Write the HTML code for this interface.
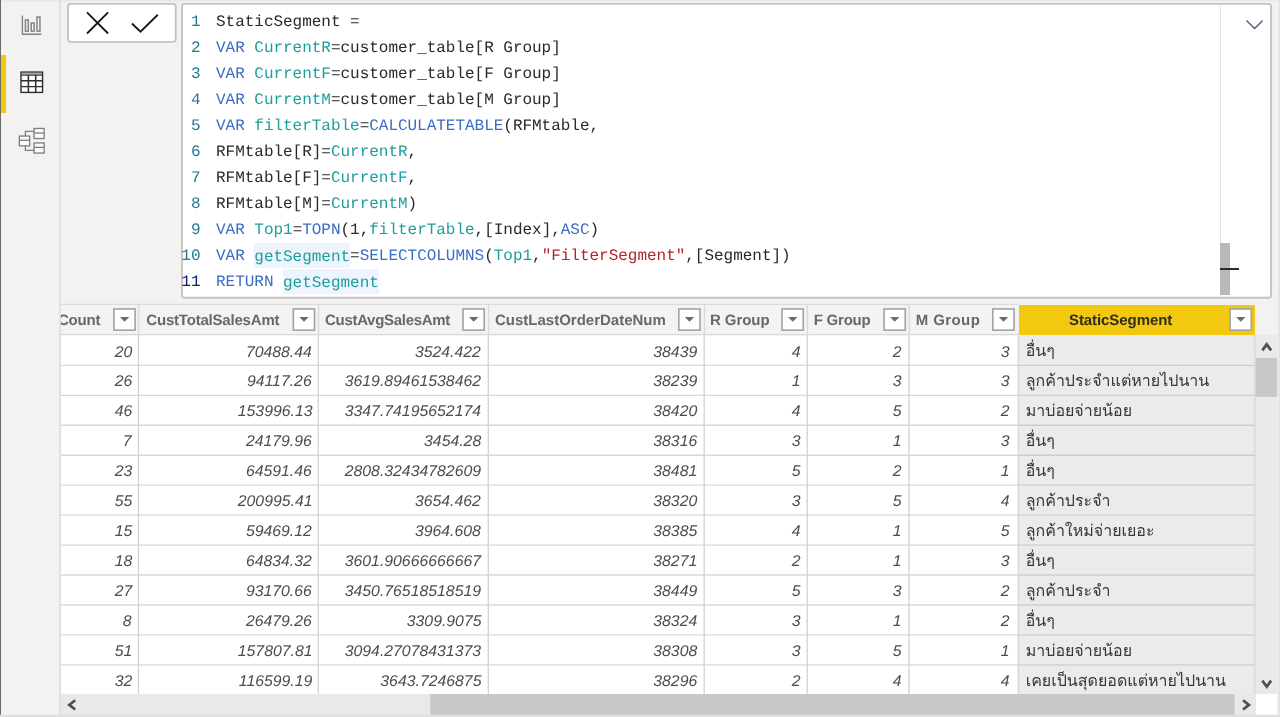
<!DOCTYPE html><html><head><meta charset="utf-8"><title>Power BI</title><style>

html,body{margin:0;padding:0}
body{text-rendering:geometricPrecision;width:1280px;height:717px;overflow:hidden;background:#f3f2f1;position:relative;font-family:"Liberation Sans",sans-serif}
.abs{position:absolute}
.code{position:absolute;left:0;white-space:pre;font-family:"Liberation Mono",monospace;font-size:16.0px;letter-spacing:-0.025px;line-height:26.0px;height:26.0px;color:#2a2a2a}
.ln{position:absolute;text-align:right;width:40px;color:#237893}
.k{color:#3c6cc4}.v,.h{color:#1f9e9e}.s{color:#b5262a}
.h{background:#eef4fd;padding:4.7px 0 3px}
.hd{position:absolute;top:306.4px;height:30px;line-height:30px;font-weight:bold;font-size:15.0px;color:#6a6866;white-space:nowrap}
.dd{position:absolute;top:308.2px;width:19.4px;height:19.2px;border:1.7px solid #a3a3a3;background:#fff;box-sizing:content-box}
.dd:after{content:"";position:absolute;left:5.1px;top:7.1px;border-left:4.6px solid transparent;border-right:4.6px solid transparent;border-top:4.6px solid #6e6e6e}
.c{position:absolute;height:30px;line-height:30px;font-style:italic;font-size:15.55px;color:#4f4d4b;text-align:right;white-space:nowrap;transform:scaleX(1.017);transform-origin:100% 50%}
.vl{position:absolute;width:1.2px;background:#dedcda}
.hl{position:absolute;height:1.2px;background:#dedcda}
.th{position:absolute;left:1018px;overflow:hidden}
.th text{font-family:"Liberation Sans",sans-serif;font-size:16px;fill:#383736;stroke:none}

</style></head><body><div id="root" style="position:absolute;left:0;top:0;width:1280px;height:717px;will-change:transform">
<div class="abs" style="left:0;top:0;width:1280px;height:3px;background:linear-gradient(#e5e4e3,#edeceb 40%,#f3f2f1)"></div>
<div class="abs" style="left:0;top:0;width:1.2px;height:717px;background:#6b6b6b"></div>
<svg class="abs" style="left:0;top:0" width="1280" height="717" viewBox="0 0 1280 717"><rect x="59.3" y="0" width="1.6" height="717" fill="#dfdddb"/><rect x="1278.4" y="0" width="1.6" height="717" fill="#e4e2e0"/></svg>
<div class="abs" style="left:1px;top:55px;width:5px;height:58px;background:#f2c811"></div>
<svg class="abs" style="left:0;top:0" width="60" height="170" viewBox="0 0 60 170" fill="none">
<g stroke="#828180" stroke-width="1.45">
<path d="M22.4 15.6V34.2H41.3" stroke-width="1.35"/>
<rect x="25.45" y="19.95" width="2.85" height="11.2"/>
<rect x="31.25" y="22.95" width="2.85" height="8.2"/>
<rect x="36.95" y="17.05" width="3" height="14.1"/>
</g>
<g stroke="#2f2e2d" stroke-width="1.4">
<rect x="21" y="72.1" width="21.55" height="20.3" fill="#fff"/>
<rect x="21.7" y="72.8" width="20.15" height="1.8" fill="#a8a8a8" stroke="none"/>
<path d="M21 75.1H42.55" stroke-width="1.2"/>
<path d="M21 80.75H42.55M21 86.7H42.55" stroke-width="1.3"/>
<path d="M28.4 75.1V92.4M35.7 75.1V92.4" stroke-width="1.5"/>
</g>
<g stroke="#7e7d7c" stroke-width="1.3" fill="#fafafa">
<path d="M25.4 136V131.4H34M25.4 146V150.3H34" fill="none"/>
<rect x="19.35" y="136.05" width="10.3" height="9.8"/>
<path d="M19.35 140.3H29.65"/>
<rect x="34.05" y="128.45" width="10.1" height="10.1"/>
<path d="M34.05 133H44.15"/>
<rect x="34.05" y="142.95" width="10.1" height="10.1"/>
<path d="M34.05 147.4H44.15"/>
</g>
</svg>
<svg class="abs" style="left:0;top:0" width="1280" height="304" viewBox="0 0 1280 304" fill="#fff" stroke="#c6c4c2" stroke-width="1.9"><rect x="68" y="3.85" width="107.7" height="38.05" rx="2.6"/><rect x="182" y="3.85" width="1089.1" height="293.95" rx="2.6"/></svg>
<svg class="abs" style="left:60px;top:0" width="120" height="46" viewBox="60 0 120 46" fill="none" stroke="#1c1718" stroke-width="1.9">
<path d="M87 12.4L108.1 33.5M108.1 12.4L87 33.5"/>
<path d="M131.9 23.5L140.5 31.6L157.8 14.8"/>
</svg>
<div class="abs" style="left:1219.5px;top:5px;width:1px;height:291px;background:#e4e4e4"></div>
<div class="abs" style="left:1220.3px;top:242.6px;width:9.5px;height:52px;background:#b8b8b8"></div>
<div class="abs" style="left:1220.3px;top:267.8px;width:18.7px;height:2.2px;background:#2b2b2b"></div>
<svg class="abs" style="left:1240px;top:10px" width="30" height="24" viewBox="1240 10 30 24" fill="none" stroke="#51606f" stroke-width="1.4"><path d="M1246.5 20.6L1254.6 28.6L1262.7 20.6"/></svg>
<div class="code" style="top:9.20px"><span class="ln" style="left:160.5px;color:#237893">1</span><span class="abs" style="left:216.0px">StaticSegment =</span></div>
<div class="code" style="top:35.20px"><span class="ln" style="left:160.5px;color:#237893">2</span><span class="abs" style="left:216.0px"><span class="k">VAR </span><span class="v">CurrentR</span>=customer_table[R Group]</span></div>
<div class="code" style="top:61.20px"><span class="ln" style="left:160.5px;color:#237893">3</span><span class="abs" style="left:216.0px"><span class="k">VAR </span><span class="v">CurrentF</span>=customer_table[F Group]</span></div>
<div class="code" style="top:87.20px"><span class="ln" style="left:160.5px;color:#237893">4</span><span class="abs" style="left:216.0px"><span class="k">VAR </span><span class="v">CurrentM</span>=customer_table[M Group]</span></div>
<div class="code" style="top:113.20px"><span class="ln" style="left:160.5px;color:#237893">5</span><span class="abs" style="left:216.0px"><span class="k">VAR </span><span class="v">filterTable</span>=<span class="k">CALCULATETABLE</span>(RFMtable,</span></div>
<div class="code" style="top:139.20px"><span class="ln" style="left:160.5px;color:#237893">6</span><span class="abs" style="left:216.0px">RFMtable[R]=<span class="v">CurrentR</span>,</span></div>
<div class="code" style="top:165.20px"><span class="ln" style="left:160.5px;color:#237893">7</span><span class="abs" style="left:216.0px">RFMtable[F]=<span class="v">CurrentF</span>,</span></div>
<div class="code" style="top:191.20px"><span class="ln" style="left:160.5px;color:#237893">8</span><span class="abs" style="left:216.0px">RFMtable[M]=<span class="v">CurrentM</span>)</span></div>
<div class="code" style="top:217.20px"><span class="ln" style="left:160.5px;color:#237893">9</span><span class="abs" style="left:216.0px"><span class="k">VAR </span><span class="v">Top1</span>=<span class="k">TOPN</span>(1,<span class="v">filterTable</span>,[Index],<span class="k">ASC</span>)</span></div>
<div class="code" style="top:243.20px"><span class="ln" style="left:160.5px;color:#237893">10</span><span class="abs" style="left:216.0px"><span class="k">VAR </span><span class="h">getSegment</span>=<span class="k">SELECTCOLUMNS</span>(<span class="v">Top1</span>,<span class="s">"FilterSegment"</span>,[Segment])</span></div>
<div class="code" style="top:269.20px"><span class="ln" style="left:160.5px;color:#0b216f">11</span><span class="abs" style="left:216.0px"><span class="k">RETURN </span><span class="h">getSegment</span></span></div>
<div class="abs" style="left:60.9px;top:335.0px;width:957.6px;height:359.0px;background:#fff"></div>
<div class="abs" style="left:1018.5px;top:335.0px;width:236.9000000000001px;height:359.0px;background:#edebe9"></div>
<div class="abs" style="left:60.9px;top:304.5px;width:957.6px;height:30.5px;background:#f4f3f2"></div>
<div class="abs" style="left:1018.8px;top:305px;width:236.60000000000014px;height:29.5px;background:#f2c811"></div>
<div class="abs" style="left:60.9px;top:305px;width:60px;height:30px;overflow:hidden"><div class="hd" id="h0" style="top:1.4px;right:20.70px;letter-spacing:-0.200px">Count</div></div>
<div class="hd" id="h1" style="left:146.30px;letter-spacing:-0.200px">CustTotalSalesAmt</div>
<div class="hd" id="h2" style="left:325.00px;letter-spacing:-0.300px">CustAvgSalesAmt</div>
<div class="hd" id="h3" style="left:495.00px;letter-spacing:0.000px">CustLastOrderDateNum</div>
<div class="hd" id="h4" style="left:710.00px;letter-spacing:-0.070px">R Group</div>
<div class="hd" id="h5" style="left:813.70px;letter-spacing:-0.220px">F Group</div>
<div class="hd" id="h6" style="left:915.70px;letter-spacing:0.420px">M Group</div>
<div class="hd" id="h7" style="left:1069.00px;color:#302d1d;letter-spacing:-0.080px">StaticSegment</div>
<svg class="abs" style="left:0;top:300px" width="1280" height="40" viewBox="0 300 1280 40"><g transform="translate(113.10 308.15)"><rect x="0.8" y="0.8" width="21.2" height="21.2" fill="#fff" stroke="#a2a2a2" stroke-width="1.6"/><path d="M6.8 8.9H16.2L11.5 13.5Z" fill="#6c6c6c"/></g><g transform="translate(292.50 308.15)"><rect x="0.8" y="0.8" width="21.2" height="21.2" fill="#fff" stroke="#a2a2a2" stroke-width="1.6"/><path d="M6.8 8.9H16.2L11.5 13.5Z" fill="#6c6c6c"/></g><g transform="translate(462.20 308.15)"><rect x="0.8" y="0.8" width="21.2" height="21.2" fill="#fff" stroke="#a2a2a2" stroke-width="1.6"/><path d="M6.8 8.9H16.2L11.5 13.5Z" fill="#6c6c6c"/></g><g transform="translate(678.00 308.15)"><rect x="0.8" y="0.8" width="21.2" height="21.2" fill="#fff" stroke="#a2a2a2" stroke-width="1.6"/><path d="M6.8 8.9H16.2L11.5 13.5Z" fill="#6c6c6c"/></g><g transform="translate(781.25 308.15)"><rect x="0.8" y="0.8" width="21.2" height="21.2" fill="#fff" stroke="#a2a2a2" stroke-width="1.6"/><path d="M6.8 8.9H16.2L11.5 13.5Z" fill="#6c6c6c"/></g><g transform="translate(883.25 308.15)"><rect x="0.8" y="0.8" width="21.2" height="21.2" fill="#fff" stroke="#a2a2a2" stroke-width="1.6"/><path d="M6.8 8.9H16.2L11.5 13.5Z" fill="#6c6c6c"/></g><g transform="translate(992.00 308.15)"><rect x="0.8" y="0.8" width="21.2" height="21.2" fill="#fff" stroke="#a2a2a2" stroke-width="1.6"/><path d="M6.8 8.9H16.2L11.5 13.5Z" fill="#6c6c6c"/></g><g transform="translate(1229.30 308.15)"><rect x="0.8" y="0.8" width="21.2" height="21.2" fill="#fff" stroke="#a2a2a2" stroke-width="1.6"/><path d="M6.8 8.9H16.2L11.5 13.5Z" fill="#6c6c6c"/></g></svg>
<div class="c" style="top:337.51px;right:1147.9px">20</div>
<div class="c" style="top:337.51px;right:968.0px">70488.44</div>
<div class="c" style="top:337.51px;right:799.0px">3524.422</div>
<div class="c" style="top:337.51px;right:583.1px">38439</div>
<div class="c" style="top:337.51px;right:479.6px">4</div>
<div class="c" style="top:337.51px;right:378.5px">2</div>
<div class="c" style="top:337.51px;right:270.0px">3</div>
<svg class="th" style="top:335.36px" width="236" height="30" viewBox="0 0 236 30"><text x="7.7" y="21.2">อื่นๆ</text></svg>
<div class="c" style="top:367.46px;right:1147.9px">26</div>
<div class="c" style="top:367.46px;right:968.0px">94117.26</div>
<div class="c" style="top:367.46px;right:799.0px">3619.89461538462</div>
<div class="c" style="top:367.46px;right:583.1px">38239</div>
<div class="c" style="top:367.46px;right:479.6px">1</div>
<div class="c" style="top:367.46px;right:378.5px">3</div>
<div class="c" style="top:367.46px;right:270.0px">3</div>
<svg class="th" style="top:365.31px" width="236" height="30" viewBox="0 0 236 30"><text x="7.7" y="21.2">ลูกค้าประจำแต่หายไปนาน</text></svg>
<div class="c" style="top:397.40px;right:1147.9px">46</div>
<div class="c" style="top:397.40px;right:968.0px">153996.13</div>
<div class="c" style="top:397.40px;right:799.0px">3347.74195652174</div>
<div class="c" style="top:397.40px;right:583.1px">38420</div>
<div class="c" style="top:397.40px;right:479.6px">4</div>
<div class="c" style="top:397.40px;right:378.5px">5</div>
<div class="c" style="top:397.40px;right:270.0px">2</div>
<svg class="th" style="top:395.25px" width="236" height="30" viewBox="0 0 236 30"><text x="7.7" y="21.2">มาบ่อยจ่ายน้อย</text></svg>
<div class="c" style="top:427.35px;right:1147.9px">7</div>
<div class="c" style="top:427.35px;right:968.0px">24179.96</div>
<div class="c" style="top:427.35px;right:799.0px">3454.28</div>
<div class="c" style="top:427.35px;right:583.1px">38316</div>
<div class="c" style="top:427.35px;right:479.6px">3</div>
<div class="c" style="top:427.35px;right:378.5px">1</div>
<div class="c" style="top:427.35px;right:270.0px">3</div>
<svg class="th" style="top:425.20px" width="236" height="30" viewBox="0 0 236 30"><text x="7.7" y="21.2">อื่นๆ</text></svg>
<div class="c" style="top:457.29px;right:1147.9px">23</div>
<div class="c" style="top:457.29px;right:968.0px">64591.46</div>
<div class="c" style="top:457.29px;right:799.0px">2808.32434782609</div>
<div class="c" style="top:457.29px;right:583.1px">38481</div>
<div class="c" style="top:457.29px;right:479.6px">5</div>
<div class="c" style="top:457.29px;right:378.5px">2</div>
<div class="c" style="top:457.29px;right:270.0px">1</div>
<svg class="th" style="top:455.14px" width="236" height="30" viewBox="0 0 236 30"><text x="7.7" y="21.2">อื่นๆ</text></svg>
<div class="c" style="top:487.24px;right:1147.9px">55</div>
<div class="c" style="top:487.24px;right:968.0px">200995.41</div>
<div class="c" style="top:487.24px;right:799.0px">3654.462</div>
<div class="c" style="top:487.24px;right:583.1px">38320</div>
<div class="c" style="top:487.24px;right:479.6px">3</div>
<div class="c" style="top:487.24px;right:378.5px">5</div>
<div class="c" style="top:487.24px;right:270.0px">4</div>
<svg class="th" style="top:485.09px" width="236" height="30" viewBox="0 0 236 30"><text x="7.7" y="21.2">ลูกค้าประจำ</text></svg>
<div class="c" style="top:517.18px;right:1147.9px">15</div>
<div class="c" style="top:517.18px;right:968.0px">59469.12</div>
<div class="c" style="top:517.18px;right:799.0px">3964.608</div>
<div class="c" style="top:517.18px;right:583.1px">38385</div>
<div class="c" style="top:517.18px;right:479.6px">4</div>
<div class="c" style="top:517.18px;right:378.5px">1</div>
<div class="c" style="top:517.18px;right:270.0px">5</div>
<svg class="th" style="top:515.03px" width="236" height="30" viewBox="0 0 236 30"><text x="7.7" y="21.2">ลูกค้าใหม่จ่ายเยอะ</text></svg>
<div class="c" style="top:547.13px;right:1147.9px">18</div>
<div class="c" style="top:547.13px;right:968.0px">64834.32</div>
<div class="c" style="top:547.13px;right:799.0px">3601.90666666667</div>
<div class="c" style="top:547.13px;right:583.1px">38271</div>
<div class="c" style="top:547.13px;right:479.6px">2</div>
<div class="c" style="top:547.13px;right:378.5px">1</div>
<div class="c" style="top:547.13px;right:270.0px">3</div>
<svg class="th" style="top:544.98px" width="236" height="30" viewBox="0 0 236 30"><text x="7.7" y="21.2">อื่นๆ</text></svg>
<div class="c" style="top:577.07px;right:1147.9px">27</div>
<div class="c" style="top:577.07px;right:968.0px">93170.66</div>
<div class="c" style="top:577.07px;right:799.0px">3450.76518518519</div>
<div class="c" style="top:577.07px;right:583.1px">38449</div>
<div class="c" style="top:577.07px;right:479.6px">5</div>
<div class="c" style="top:577.07px;right:378.5px">3</div>
<div class="c" style="top:577.07px;right:270.0px">2</div>
<svg class="th" style="top:574.92px" width="236" height="30" viewBox="0 0 236 30"><text x="7.7" y="21.2">ลูกค้าประจำ</text></svg>
<div class="c" style="top:607.02px;right:1147.9px">8</div>
<div class="c" style="top:607.02px;right:968.0px">26479.26</div>
<div class="c" style="top:607.02px;right:799.0px">3309.9075</div>
<div class="c" style="top:607.02px;right:583.1px">38324</div>
<div class="c" style="top:607.02px;right:479.6px">3</div>
<div class="c" style="top:607.02px;right:378.5px">1</div>
<div class="c" style="top:607.02px;right:270.0px">2</div>
<svg class="th" style="top:604.87px" width="236" height="30" viewBox="0 0 236 30"><text x="7.7" y="21.2">อื่นๆ</text></svg>
<div class="c" style="top:636.96px;right:1147.9px">51</div>
<div class="c" style="top:636.96px;right:968.0px">157807.81</div>
<div class="c" style="top:636.96px;right:799.0px">3094.27078431373</div>
<div class="c" style="top:636.96px;right:583.1px">38308</div>
<div class="c" style="top:636.96px;right:479.6px">3</div>
<div class="c" style="top:636.96px;right:378.5px">5</div>
<div class="c" style="top:636.96px;right:270.0px">1</div>
<svg class="th" style="top:634.81px" width="236" height="30" viewBox="0 0 236 30"><text x="7.7" y="21.2">มาบ่อยจ่ายน้อย</text></svg>
<div class="c" style="top:666.91px;right:1147.9px">32</div>
<div class="c" style="top:666.91px;right:968.0px">116599.19</div>
<div class="c" style="top:666.91px;right:799.0px">3643.7246875</div>
<div class="c" style="top:666.91px;right:583.1px">38296</div>
<div class="c" style="top:666.91px;right:479.6px">2</div>
<div class="c" style="top:666.91px;right:378.5px">4</div>
<div class="c" style="top:666.91px;right:270.0px">4</div>
<svg class="th" style="top:664.75px" width="236" height="30" viewBox="0 0 236 30"><text x="7.7" y="21.2">เคยเป็นสุดยอดแต่หายไปนาน</text></svg>
<svg class="abs" style="left:0;top:0" width="1280" height="717" viewBox="0 0 1280 717" fill="none" stroke-width="1.35"><path d="M60.9 365.40H1018.3" stroke="#d9d8d7"/><path d="M1018.3 365.40H1255.4" stroke="#cfcdcb"/><path d="M60.9 395.35H1018.3" stroke="#d9d8d7"/><path d="M1018.3 395.35H1255.4" stroke="#cfcdcb"/><path d="M60.9 425.29H1018.3" stroke="#d9d8d7"/><path d="M1018.3 425.29H1255.4" stroke="#cfcdcb"/><path d="M60.9 455.24H1018.3" stroke="#d9d8d7"/><path d="M1018.3 455.24H1255.4" stroke="#cfcdcb"/><path d="M60.9 485.18H1018.3" stroke="#d9d8d7"/><path d="M1018.3 485.18H1255.4" stroke="#cfcdcb"/><path d="M60.9 515.12H1018.3" stroke="#d9d8d7"/><path d="M1018.3 515.12H1255.4" stroke="#cfcdcb"/><path d="M60.9 545.07H1018.3" stroke="#d9d8d7"/><path d="M1018.3 545.07H1255.4" stroke="#cfcdcb"/><path d="M60.9 575.01H1018.3" stroke="#d9d8d7"/><path d="M1018.3 575.01H1255.4" stroke="#cfcdcb"/><path d="M60.9 604.96H1018.3" stroke="#d9d8d7"/><path d="M1018.3 604.96H1255.4" stroke="#cfcdcb"/><path d="M60.9 634.91H1018.3" stroke="#d9d8d7"/><path d="M1018.3 634.91H1255.4" stroke="#cfcdcb"/><path d="M60.9 664.85H1018.3" stroke="#d9d8d7"/><path d="M1018.3 664.85H1255.4" stroke="#cfcdcb"/><path d="M60.9 334.6H1018.6" stroke="#d9d7d5"/><path d="M60.9 304.3H1018.6" stroke="#dddbd9"/><path d="M138.4 335.0V694.0" stroke="#d6d4d2"/><path d="M318.3 335.0V694.0" stroke="#d6d4d2"/><path d="M488.3 335.0V694.0" stroke="#d6d4d2"/><path d="M704.2 335.0V694.0" stroke="#d6d4d2"/><path d="M807.2 335.0V694.0" stroke="#d6d4d2"/><path d="M909.0 335.0V694.0" stroke="#d6d4d2"/><path d="M1018.3 335.0V694.0" stroke="#d6d4d2"/><path d="M138.70000000000002 304V335.0" stroke="#dcdad8"/><path d="M318.6 304V335.0" stroke="#dcdad8"/><path d="M488.6 304V335.0" stroke="#dcdad8"/><path d="M704.5 304V335.0" stroke="#dcdad8"/><path d="M807.5 304V335.0" stroke="#dcdad8"/><path d="M909.3 304V335.0" stroke="#dcdad8"/><path d="M1254.9 335.0V694.0" stroke="#d8d6d4"/></svg>
<div class="abs" style="left:61px;top:694px;width:1195px;height:21px;background:#e9e9e9"></div>
<div class="abs" style="left:1256px;top:335px;width:21px;height:359px;background:#e9e9e9"></div>
<div class="abs" style="left:1256px;top:694px;width:21px;height:21px;background:#fff"></div>
<svg class="abs" style="left:0;top:330px" width="1280" height="387" viewBox="0 330 1280 387"><rect x="430.2" y="694" width="804.3" height="21" fill="#c8c8c8"/><rect x="1255.6" y="357.9" width="21.7" height="39" fill="#c8c8c8"/><rect x="1277.2" y="335" width="0.5" height="380" fill="#ebebeb"/><rect x="0" y="714.8" width="1280" height="2.2" fill="#e1dfdd"/><g fill="none" stroke="#4f4f4f" stroke-width="2.7"><path d="M75.2 700.3L69.3 704.9L75.2 709.5"/><path d="M1243 700.3L1248.9 704.9L1243 709.5"/><path d="M1262.3 350.4L1266.7 344.4L1271.1 350.4"/><path d="M1262.3 680.6L1266.7 686.6L1271.1 680.6"/></g></svg>
</div></body></html>
